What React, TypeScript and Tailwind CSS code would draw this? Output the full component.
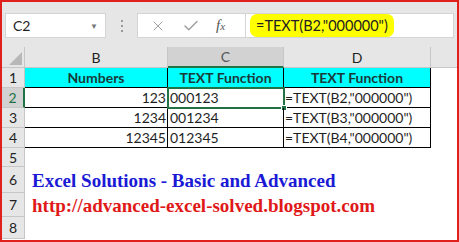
import { X, Check } from "lucide-react";

const rowH = ["h-[20px]", "h-[20px]", "h-[20px]", "h-[20px]", "h-[19px]", "h-[26px]", "h-[24px]", "h-[22px]"];

export default function App() {
  const font = "font-['Lato','Open_Sans',sans-serif]";
  return (
    <div className={`w-[459px] h-[242px] border-2 border-[#e0201c] bg-white overflow-hidden text-[#1f1f1f] ${font}`}>
      {/* formula bar */}
      <div className="h-[45px] bg-[#e6e6e6] flex items-start pt-[11px] pl-[3px] pr-[3px]">
        <div className="w-[101px] h-[25px] bg-white border border-[#d4d4d4] flex items-center justify-between px-[7px] text-[14px]">
          <span>C2</span>
          <span className="text-[8px] text-[#777]">▼</span>
        </div>
        <div className="w-[31px] h-[25px] flex flex-col items-center justify-center gap-[3px]">
          <span className="w-[2px] h-[2px] bg-[#9a9a9a]" />
          <span className="w-[2px] h-[2px] bg-[#9a9a9a]" />
          <span className="w-[2px] h-[2px] bg-[#9a9a9a]" />
        </div>
        <div className="w-[108px] h-[25px] bg-white border border-[#d4d4d4] border-r-0 flex items-center pl-[12px] gap-[16px] text-[#a0a0a0]">
          <X className="w-[16px] h-[16px]" strokeWidth={1.5} />
          <Check className="w-[18px] h-[18px]" strokeWidth={2} />
          <span className="font-['Liberation_Serif',serif] italic text-[15px] text-[#555]">f<span className="text-[11px]">x</span></span>
        </div>
        <div className="flex-1 h-[25px] bg-white border border-[#d4d4d4] flex items-center pl-[4px]">
          <span className="bg-[#ffff00] rounded-[7px] px-[6px] h-[23px] flex items-center text-[14.5px] text-[#222]">=TEXT(B2,"000000")</span>
        </div>
      </div>

      {/* sheet */}
      <div className="grid grid-cols-[23px_143px_116px_147px_1fr]">
        {/* column headers */}
        <div className="h-[21px] bg-[#e6e6e6] border-r border-b border-[#c6c6c6] flex items-end justify-end p-[2px]">
          <div className="w-0 h-0 border-l-[13px] border-l-transparent border-b-[13px] border-b-[#b8b8b8]" />
        </div>
        <div className="h-[21px] bg-[#e6e6e6] border-r border-b border-[#c6c6c6] flex items-center justify-center text-[14px]">B</div>
        <div className="h-[21px] bg-[#d2d2d2] border-r border-[#c6c6c6] border-b-2 border-b-[#217346] flex items-center justify-center text-[14px] text-[#555]">C</div>
        <div className="h-[21px] bg-[#e6e6e6] border-r border-b border-[#c6c6c6] flex items-center justify-center text-[14px]">D</div>
        <div className="h-[21px] bg-[#e6e6e6] border-b border-[#c6c6c6]" />

        {rowH.map((h, i) => {
          const r = i + 1;
          const sel = r === 2;
          const head = (
            <div
              key={`h${r}`}
              className={`${h} ${sel ? "bg-[#d2d2d2] border-r-2 border-r-[#217346] text-[#217346]" : "bg-[#e6e6e6] border-r border-[#c6c6c6]"} border-b border-b-[#c6c6c6] flex items-center justify-center text-[14px]`}
            >
              {r}
            </div>
          );
          if (r === 1) {
            return [
              head,
              <div key="b1" className={`${h} bg-[#00ffff] border-r border-b border-black flex items-center justify-center font-bold text-[14px] text-[#1a3a3a]`}>Numbers</div>,
              <div key="c1" className={`${h} bg-[#00ffff] border-r border-b border-black flex items-center justify-center font-bold text-[14px] text-[#1a3a3a]`}>TEXT Function</div>,
              <div key="d1" className={`${h} bg-[#00ffff] border-r border-b border-black flex items-center justify-center font-bold text-[14px] text-[#1a3a3a]`}>TEXT Function</div>,
              <div key="e1" className={h} />,
            ];
          }
          if (r <= 4) {
            const n = ["123", "1234", "12345"][r - 2];
            return [
              head,
              <div key={`b${r}`} className={`${h} border-r border-b border-black flex items-center justify-end pr-[1px] text-[14px]`}>{n}</div>,
              <div key={`c${r}`} className={`${h} relative border-b border-black flex items-center pl-[2px] text-[14px] ${sel ? "outline-2 outline-[#217346] -outline-offset-1 border-r border-r-black" : "border-r border-r-black"}`}>
                {n.padStart(6, "0")}
                {sel && <span className="absolute -right-[4px] -bottom-[4px] w-[6px] h-[6px] bg-[#217346] border border-white" />}
              </div>,
              <div key={`d${r}`} className={`${h} border-r border-b border-black flex items-center pl-[1px] text-[14px]`}>{`=TEXT(B${r},"000000")`}</div>,
              <div key={`e${r}`} className={h} />,
            ];
          }
          return [
            head,
            <div key={`b${r}`} className={`${h} col-span-4 flex items-center pl-[7px] pt-[2px] font-['Liberation_Serif',serif] font-bold text-[19px] ${r === 6 ? "text-[#1a1ad6]" : "text-[#e01818]"}`}>
              {r === 6 ? "Excel Solutions - Basic and Advanced" : r === 7 ? "http://advanced-excel-solved.blogspot.com" : ""}
            </div>,
          ];
        })}
      </div>
    </div>
  );
}
